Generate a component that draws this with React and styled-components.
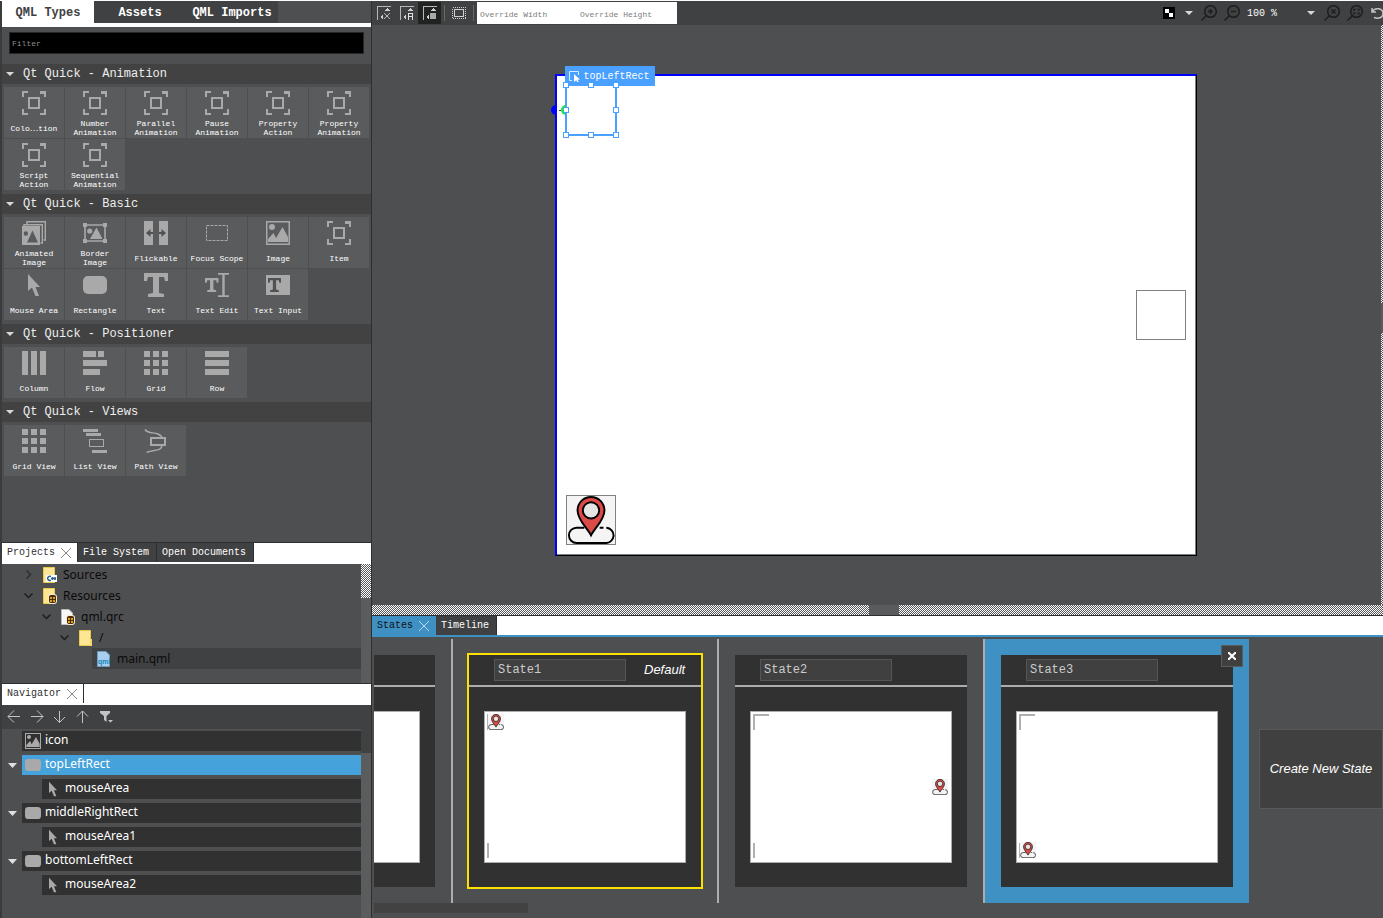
import React from "react";
import styled, { createGlobalStyle, css } from "styled-components";

const mono = `"Liberation Mono", "Noto Sans CJK SC", monospace`;
const sans = `"Noto Sans", "Noto Sans CJK SC", sans-serif`;
const arial = `"Liberation Sans", Arial, sans-serif`;
const c = {
  panel: "#4e4f51",
  bar: "#404142",
  dark: "#313131",
  header: "#424242",
  line: "#2e2f30",
  icon: "#a9a9a9",
  blue: "#3f91c4",
  select: "#49a0ff",
  rule: "#adadad",
};
const dither = css`
  background: repeating-conic-gradient(#ffffff 0 25%, #58595b 0 50%) 0 0 / 2px 2px;
`;

const GlobalStyle = createGlobalStyle`
  *, *::before, *::after { box-sizing: border-box; }
  body { margin: 0; background: ${c.panel}; }
  button, input, select { margin: 0; padding: 0; border: 0; border-radius: 0; background: none; font: inherit; color: inherit; outline: none; }
  ul { list-style: none; margin: 0; padding: 0; }
  h1, h2 { margin: 0; font: inherit; }
  svg { display: block; flex: none; }
`;

const Window = styled.div`
  display: grid;
  grid-template-columns: 372px minmax(0, 1fr);
  min-height: 100vh;
  border-top: 1px solid #fdfdfd;
  background: ${c.panel};
  font-family: ${mono};
  font-size: 10px;
  color: #ffffff;
`;
const Sidebar = styled.aside`
  display: flex;
  flex-direction: column;
  border-left: 2px solid #3a3b3c;
  border-right: 1px solid ${c.line};
`;
const Main = styled.main`
  display: flex;
  flex-direction: column;
  min-width: 0;
`;

/* Library */
const Library = styled.section`
  flex: 1;
`;
const LibraryTabs = styled.div`
  display: flex;
  align-items: flex-start;
  height: 26px;
  border-bottom: 4px solid #ffffff;
`;
const LibraryTab = styled.button`
  width: 92px;
  height: 22px;
  padding-top: 2px;
  font-size: 12px;
  line-height: 16px;
  font-weight: bold;
  white-space: nowrap;
  background: ${(p) => (p.$active ? "#ffffff" : c.bar)};
  color: ${(p) => (p.$active ? "#404142" : "#ffffff")};
`;
const FilterBox = styled.div`
  padding: 5px 7px 10px;
`;
const FilterInput = styled.input`
  display: block;
  width: 100%;
  height: 22px;
  background: #000000;
  border: 1px solid #262728;
  padding: 0 2px;
  font-size: 8px;
  &::placeholder { color: #8e8e8e; opacity: 1; }
`;
const SectionHeader = styled.button`
  display: flex;
  align-items: center;
  gap: 9px;
  width: 100%;
  height: 20px;
  padding-left: 4px;
  background: ${c.header};
  color: #eeeeee;
  font-size: 12px;
`;
const Tiles = styled.div`
  display: flex;
  flex-wrap: wrap;
  gap: 1px;
  padding: 3px 0 4px 2px;
`;
const Tile = styled.button`
  display: flex;
  flex-direction: column;
  align-items: center;
  gap: 4px;
  width: 60px;
  height: 51px;
  padding-top: 4px;
  background: #5a5b5d;
`;
const TileLabel = styled.span`
  display: flex;
  align-items: center;
  justify-content: center;
  height: 18px;
  font-size: 8px;
  line-height: 9px;
  text-align: center;
  white-space: pre;
`;

/* Dock tabs */
const DockTabs = styled.div`
  display: flex;
  align-items: flex-start;
  height: 22px;
  background: #ffffff;
  border-top: 1px solid ${c.line};
  ${(p) => p.$accent && css`border-bottom: 2px solid ${c.blue};`}
`;
const DockTab = styled.button`
  display: flex;
  align-items: center;
  gap: 6px;
  height: 19px;
  padding: 0 6px;
  padding-left: 5px;
  color: ${(p) => (p.$tone === "dark" ? "#ffffff" : p.$tone === "blue" ? "#101010" : "#303030")};
  background: ${(p) => (p.$tone === "dark" ? c.bar : p.$tone === "blue" ? c.blue : "#ffffff")};
  border-right: 1px solid ${(p) => (p.$tone === "blue" ? c.blue : c.line)};
  white-space: nowrap;
`;
const DockLabel = styled.span`
  line-height: 14px;
  padding-right: ${(p) => (p.$alone ? 1 : 0)}px;
`;

/* Trees */
const ScrollRow = styled.div`
  display: grid;
  grid-template-columns: 1fr 10px;
`;
const Track = styled.div`
  background: #5b5c5e;
  min-height: 0;
`;
const Thumb = styled.div`
  height: ${(p) => p.$size};
  ${(p) => (p.$plain ? css`background: ${c.bar};` : dither)}
`;
const ProjectTree = styled.ul`
  font-family: ${sans};
  font-size: 12px;
  color: #0a0a0a;
  padding-bottom: 14px;
`;
const ProjectRow = styled.li`
  display: flex;
  height: 21px;
  padding-left: ${(p) => 20 + p.$depth * 18}px;
`;
const Expander = styled.span`
  display: flex;
  align-items: center;
  width: 16px;
  padding-left: 2px;
`;
const ProjectItem = styled.span`
  display: flex;
  align-items: center;
  gap: 6px;
  flex: 1;
  padding-left: 4px;
  background: ${(p) => (p.$selected ? c.bar : "transparent")};
`;
const NavTools = styled.div`
  display: flex;
  align-items: center;
  gap: 7px;
  height: 24px;
  padding-left: 4px;
  background: ${c.bar};
`;
const ToolButton = styled.button`
  display: flex;
  align-items: center;
  justify-content: center;
  width: ${(p) => p.$w || 16}px;
  height: 22px;
  background: ${(p) => (p.$active ? "#212222" : "transparent")};
`;
const NavTree = styled.ul`
  font-family: ${sans};
  font-size: 12px;
  padding: 2px 0 19px;
`;
const NavRow = styled.li`
  display: flex;
  align-items: center;
  height: 20px;
  margin-bottom: 4px;
  padding-left: ${(p) => p.$depth * 20}px;
`;
const NavArrow = styled.span`
  display: flex;
  justify-content: center;
  width: 20px;
`;
const NavItem = styled.span`
  display: flex;
  align-items: center;
  gap: 4px;
  flex: 1;
  height: 20px;
  padding-left: 3px;
  background: ${(p) => (p.$selected ? "#46a2da" : c.dark)};
`;
const NavName = styled.span`
  height: 20px;
  line-height: 18px;
`;

/* Form editor */
const EditorBar = styled.div`
  display: flex;
  align-items: center;
  height: 24px;
  background: ${c.bar};
  overflow: hidden;
`;
const Separator = styled.span`
  width: 1px;
  height: 16px;
  margin: 0 3px;
  background: #66676a;
`;
const SizeInput = styled.input`
  width: 100px;
  height: 22px;
  padding: 2px 3px 0;
  background: #ffffff;
  color: #404142;
  font-size: 8px;
  &::placeholder { color: #7c7c7c; opacity: 1; }
`;
const EditorRight = styled.div`
  display: flex;
  align-items: center;
  gap: 7px;
  margin-left: auto;
  margin-right: -3px;
`;
const ZoomField = styled.label`
  display: flex;
  align-items: center;
  width: 70px;
`;
const ZoomSelect = styled.select`
  appearance: none;
  width: 60px;
  color: #ffffff;
`;
const CanvasArea = styled.div`
  flex: 1;
  display: grid;
  grid-template-columns: minmax(0, 1fr) 2px;
  grid-template-rows: 1fr 10px;
`;
const Surface = styled.div`
  display: flex;
  align-items: center;
  justify-content: center;
  padding-right: 2px;
  overflow: hidden;
`;
const ScrollTrack = styled.div`
  display: flex;
  align-items: center;
  justify-content: center;
  ${(p) => p.$wide && css`grid-column: 1 / 3; padding-left: 12px;`}
  ${(p) => !p.$wide && css`flex-direction: column; padding-top: 6px;`}
  ${dither}
`;
const ScrollHandle = styled.div`
  width: ${(p) => (p.$wide ? "30px" : "2px")};
  height: ${(p) => (p.$wide ? "10px" : "30px")};
  background: #5a5b5d;
`;
const Artboard = styled.div`
  position: relative;
  flex: none;
  width: 642px;
  height: 482px;
  background: #ffffff;
  border: solid;
  border-width: 2px 1px 1px 2px;
  border-color: #0000ff #000000 #000000 #0000ff;
  box-shadow: inset -1px -1px 0 #808080;
`;
const Shape = styled.div`
  position: absolute;
  left: ${(p) => p.$x}px;
  top: ${(p) => p.$y}px;
  width: 50px;
  height: 50px;
  border: 1px solid #808080;
`;
const Selection = styled.div`
  position: absolute;
  left: 8px;
  top: 8px;
  width: 52px;
  height: 52px;
  border: 2px solid ${c.select};
`;
const Handle = styled.span`
  position: absolute;
  left: ${(p) => p.$x}px;
  top: ${(p) => p.$y}px;
  width: 6px;
  height: 6px;
  background: #ffffff;
  border: 1px solid ${c.select};
`;
const SelectionLabel = styled.div`
  position: absolute;
  left: 8px;
  top: -10px;
  display: flex;
  align-items: center;
  gap: 4px;
  height: 20px;
  padding: 0 5px 0 3px;
  background: ${c.select};
`;
const Anchor = styled.span`
  position: absolute;
  left: ${(p) => p.$x}px;
  top: 29px;
  width: 5px;
  height: 10px;
  border-radius: 5px 0 0 5px;
  background: ${(p) => p.$color};
`;
const AnchorLink = styled.span`
  position: absolute;
  left: 2px;
  top: 34px;
  width: 2px;
  height: 1px;
  background: #404040;
`;

/* States */
const StatesStrip = styled.div`
  display: flex;
  padding: 2px 0 0 2px;
  overflow: hidden;
`;
const StateCell = styled.div`
  position: relative;
  flex: none;
  height: 264px;
  padding: 14px;
  border-left: 2px solid ${c.rule};
  background: ${(p) => (p.$selected ? c.blue : "transparent")};
`;
const BaseCell = styled.div`
  display: flex;
  justify-content: flex-end;
  flex: none;
  width: 77px;
  height: 264px;
  padding: 14px 14px 14px 0;
  overflow: hidden;
`;
const Card = styled.article`
  flex: none;
  width: 236px;
  height: 236px;
  border: 2px solid ${(p) => (p.$default ? "#ffe100" : "transparent")};
  background: ${c.dark};
  background-clip: padding-box;
`;
const CardHead = styled.header`
  display: flex;
  align-items: center;
  gap: 18px;
  height: 32px;
  padding-left: 25px;
  border-bottom: 2px solid ${c.rule};
`;
const StateName = styled.input`
  width: 132px;
  height: 22px;
  padding: 0 3px;
  background: #404040;
  border: 1px solid #555555;
  color: #cccccc;
  font-size: 12px;
`;
const DefaultMark = styled.span`
  font: italic 13px/16px ${arial};
`;
const Preview = styled.div`
  width: 202px;
  height: 152px;
  margin: 24px 15px;
  background: #ffffff;
  border: 1px solid ${c.rule};
`;
const RemoveState = styled.button`
  position: absolute;
  top: 6px;
  right: 6px;
  display: flex;
  align-items: center;
  justify-content: center;
  width: 22px;
  height: 22px;
  background: #404040;
  border: 1px solid #5a5b5d;
`;
const CreateState = styled.button`
  align-self: center;
  flex: none;
  width: 124px;
  height: 80px;
  margin: 0 0 4px 10px;
  background: #404040;
  border: 1px solid #58595a;
  font: italic 13px/16px ${arial};
`;
const StatesScroll = styled.div`
  height: 15px;
  padding-left: 2px;
`;
const StatesThumb = styled.div`
  width: 154px;
  height: 10px;
  background: ${c.header};
`;

/* Drawings */
const Svg = ({ s = 24, w, h, box, children, ...rest }) => (
  <svg width={w || s} height={h || s} viewBox={box || `0 0 ${w || s} ${h || s}`} fill={c.icon} aria-hidden="true" {...rest}>{children}</svg>
);
const Down = ({ w = 8 }) => (
  <Svg w={w} h={4} box="0 0 8 4" fill="#d8d8d8"><path d="M0 0H8L4 4Z" /></Svg>
);
const Close = ({ color = "#868686" }) => (
  <Svg s={10} fill="none" stroke={color}><path d="M0 0L10 10M10 0L0 10" /></Svg>
);
const slabT = "M0 0H24V8H21L20 4H15V20L20 21V24H4V21L9 20V4H4L3 8H0Z";
const cells = [0, 9, 18].flatMap((x) => [0, 9, 18].map((y) => `M${x} ${y}h6v6h-6z`)).join("");
const cursor = "M6 1V18L10 14.5L13 22L13.5 23H17L13.5 14H18Z";
const art = {
  item: (
    <g shapeRendering="crispEdges">
      <path d="M0 0H6V2H2V6H0ZM18 0H24V6H22V3H18ZM0 18H2V22H6V24H0ZM22 18H24V24H18V22H22Z" />
      <path fillRule="evenodd" d="M6 6H18V18H6ZM8 8V16H16V8Z" />
    </g>
  ),
  animated: (
    <g>
      <path fill="none" stroke={c.icon} strokeWidth="1.4" d="M5 3V.7H23.3V19H21.5M2 5V3.7H20.3V22H18.5" />
      <path fillRule="evenodd" d="M0 5H18V24H0ZM6 12.5a2.2 2.2 0 1 0-4.4 0a2.2 2.2 0 1 0 4.4 0M5 21.5H16L10.5 9.5Z" />
    </g>
  ),
  border: (
    <g>
      <path d="M0 2H4V6H0ZM20 2H24V6H20ZM0 18H4V22H0ZM20 18H24V22H20Z" />
      <path fill="none" stroke={c.icon} strokeWidth="1.6" d="M2 4H22V20H2Z" />
      <circle cx="6.7" cy="10" r="2.6" /><path d="M7 18L13.5 6.5L19.5 18Z" />
    </g>
  ),
  flick: (
    <g>
      <path d="M0 0H9V24H0ZM15 0H24V24H15Z" />
      <path fill="#515254" d="M2 12L6.5 8V11H9V13H6.5V16ZM22 12L17.5 8V11H15V13H17.5V16Z" />
    </g>
  ),
  focus: <path fill="none" stroke={c.icon} strokeDasharray="3 1" d="M1.500 4.500H22.500V19.500H1.500Z" />,
  image: (
    <g>
      <path fillRule="evenodd" d="M0 0H24V24H0ZM1.500 1.500V22.500H22.500V1.500Z" />
      <path d="M2 21V18L7.500 12L10 17L16.500 6L22 16V21ZM9 6A3 3 0 1 1 3 6A3 3 0 1 1 9 6" />
    </g>
  ),
  mouse: <path d={cursor} />,
  rect: <rect y="3" width="24" height="18" rx="5" />,
  text: <path d={slabT} />,
  edit: (
    <g>
      <path d={slabT} transform="translate(0 5) scale(.56 .58)" />
      <path d="M13 0H24V1.800H19.700V22.200H24V24H13V22.200H17.300V1.800H13Z" />
    </g>
  ),
  input: (
    <g>
      <path d="M0 2H24V22H0Z" />
      <path fill="#515254" d={slabT} transform="translate(2 5) scale(.54 .58)" />
    </g>
  ),
  column: <path d="M0 0h6v24h-6zM9 0h6v24h-6zM18 0h6v24h-6z" />,
  flow: <path d="M0 0h13v6h-13zM15 0h6v6h-6zM0 9h24v6h-24zM0 18h17v6h-17z" />,
  grid: <path d={cells} />,
  row: <path d="M0 0h24v6h-24zM0 9h24v6h-24zM0 18h24v6h-24z" />,
  list: (
    <g shapeRendering="crispEdges">
      <path d="M0 0h15v3h-15zM3 4h15v3h-15zM9 21h15v3h-15z" />
      <path fillRule="evenodd" d="M6 10H21V18H6ZM7 11V17H20V11Z" />
    </g>
  ),
  path: (
    <g fill="none" stroke={c.icon}>
      <path strokeWidth="1.500" d="M1 .5C4 5 10 3 14 5C17 6.500 18 8 18 9M18 16C18 23 9 20 2.500 23.500" />
      <path strokeWidth="2" d="M7 9H21V16H7Z" />
    </g>
  ),
};

const Pin = ({ x = 0, y = 0, size = 50 }) => (
  <svg x={x} y={y} width={size} height={size} viewBox="0 0 50 50" aria-hidden="true">
    <path fill="#f4f4f4" d="M0 0H50V50H0Z" />
    <g stroke="#000000" strokeWidth="2" fill="none">
      <path d="M18 33H10A8 8 0 0 0 10 49H40A8 8 0 0 0 41 33M34 33H38" />
      <path fill="#dc4a48" d="M25 41C21 33 11 25 11 15A14 14 0 0 1 39 15C39 25 29 33 25 41Z" />
      <circle fill="#e5e5e5" cx="25" cy="15" r="8.500" />
    </g>
  </svg>
);

const sections = [
  ["Qt Quick - Animation", [
    ["Colo⋯tion", "item"], ["Number\nAnimation", "item"], ["Parallel\nAnimation", "item"], ["Pause\nAnimation", "item"],
    ["Property\nAction", "item"], ["Property\nAnimation", "item"], ["Script\nAction", "item"], ["Sequential\nAnimation", "item"],
  ]],
  ["Qt Quick - Basic", [
    ["Animated\nImage", "animated"], ["Border\nImage", "border"], ["Flickable", "flick"], ["Focus Scope", "focus"], ["Image", "image"],
    ["Item", "item"], ["Mouse Area", "mouse"], ["Rectangle", "rect"], ["Text", "text"], ["Text Edit", "edit"], ["Text Input", "input"],
  ]],
  ["Qt Quick - Positioner", [["Column", "column"], ["Flow", "flow"], ["Grid", "grid"], ["Row", "row"]]],
  ["Qt Quick - Views", [["Grid View", "grid"], ["List View", "list"], ["Path View", "path"]]],
];

const Globe = () => (
  <g>
    <rect x="6" y="6" width="9" height="10" rx="3" fill="#f5e9d0" />
    <rect x="7" y="7" width="7" height="8" rx="2" fill="#4a2b05" />
    <path fill="#d9a520" d="M8 9h2v2h-2zM11 9h2v2h-2zM8 12h2v2h-2zM11 12h2v2h-2z" />
  </g>
);
const FileIcon = ({ kind }) => (
  <Svg w={15} h={16}>
    {kind === "qrc" && <path fill="#f7f7f7" stroke="#b9b9b9" d="M1.500.5H9L12.500 4V15.500H1.500Z" />}
    {kind === "qml" && <path fill="#a9cfee" stroke="#6f9dc0" d="M1.500.5H10L13.500 4V15.500H1.500Z" />}
    {kind !== "qrc" && kind !== "qml" && <path fill="#ffe694" stroke="#eccb4a" d="M1.500.5H12.500V15.500H1.500Z" />}
    {kind === "folder" && <path fill="#f5d868" d="M12 9h2v7h-2z" />}
    {kind === "cpp" && (
      <g>
        <path fill="#ffffff" d="M4 8H15V15H4Z" />
        <path fill="none" stroke="#2d6390" strokeWidth="1.500" d="M9 9.500C5 8 4 14 9 13.500M9 11.500H14M10.500 10V13M13 10V13" />
      </g>
    )}
    {(kind === "res" || kind === "qrc") && <Globe />}
    {kind === "qml" && <text x="2" y="13" fontSize="7" fontFamily="Liberation Sans" fontWeight="bold" fill="#1286b8">qml</text>}
  </Svg>
);
const files = [
  ["Sources", "cpp", 0, "closed"], ["Resources", "res", 0, "open"], ["qml.qrc", "qrc", 1, "open"],
  ["/", "folder", 2, "open"], ["main.qml", "qml", 3, "none"],
];
const items = [
  ["icon", "image", 0], ["topLeftRect", "rect", 0, true], ["mouseArea", "mouse", 1],
  ["middleRightRect", "rect", 0, true], ["mouseArea1", "mouse", 1],
  ["bottomLeftRect", "rect", 0, true], ["mouseArea2", "mouse", 1],
];

const LineIcon = ({ d, label }) => (
  <ToolButton aria-label={label}>
    <Svg s={14} fill="none" stroke="#c4c4c4"><path d={d} /></Svg>
  </ToolButton>
);
const SnapIcon = ({ kind }) => (
  <Svg s={14} shapeRendering="crispEdges">
    <path d="M0 0H14V1H1V14H0Z" fill="#b8b8b8" />
    <path d="M3 11L6 9V13ZM8 5L10 2L13 5Z" fill="#d0d0d0" />
    {kind === "x" && <path d="M7 7L13 13M13 7L7 13" stroke="#b8b8b8" shapeRendering="auto" />}
    {kind === "a" && <path fill="#e0e0e0" d="M8 7h5v7h-1v-3h-3v3h-1zM9 8v2h3v-2z" fillRule="evenodd" />}
    {kind === "box" && <path fill="#a9a9a9" d="M7 7h6v6h-6z" />}
  </Svg>
);
const Lens = ({ mark }) => (
  <Svg s={16} fill="none" stroke="#1d1e1f" strokeWidth="1.500">
    <circle cx="9.500" cy="6.500" r="5.800" /><path d="M5.500 10.500L.5 15.500" /><path d={mark} />
  </Svg>
);

function PreviewMarks({ pin, top }) {
  return (
    <svg width="200" height="150" viewBox="0 0 200 150" aria-hidden="true">
      <path fill="none" stroke="#b0b0b0" strokeWidth="2" d={top ? "M3 18V3H18" : ""} />
      <path fill="none" stroke="#b0b0b0" strokeWidth="2" d="M3 131V146" />
      {pin && <Pin x={pin[0]} y={pin[1]} size={16} />}
    </svg>
  );
}
function StateCard({ name, isDefault, pin, top }) {
  return (
    <Card $default={isDefault}>
      <CardHead>
        {name && <StateName aria-label="State name" defaultValue={name} />}
        {isDefault && <DefaultMark>Default</DefaultMark>}
      </CardHead>
      <Preview>{name && <PreviewMarks pin={pin} top={top} />}</Preview>
    </Card>
  );
}

export default function App() {
  return (
    <Window>
      <GlobalStyle />
      <Sidebar>
        <Library>
          <LibraryTabs>
            <LibraryTab $active>QML Types</LibraryTab>
            <LibraryTab>Assets</LibraryTab>
            <LibraryTab>QML Imports</LibraryTab>
          </LibraryTabs>
          <FilterBox><FilterInput aria-label="Filter" placeholder="Filter" /></FilterBox>
          {sections.map(([title, tiles]) => (
            <section key={title}>
              <h2><SectionHeader><Down />{title}</SectionHeader></h2>
              <Tiles>
                {tiles.map(([label, icon], i) => (
                  <Tile key={i}><Svg>{art[icon]}</Svg><TileLabel>{label}</TileLabel></Tile>
                ))}
              </Tiles>
            </section>
          ))}
        </Library>

        <DockTabs>
          <DockTab><DockLabel>Projects</DockLabel><Close /></DockTab>
          <DockTab $tone="dark"><DockLabel $alone>File System</DockLabel></DockTab>
          <DockTab $tone="dark"><DockLabel $alone>Open Documents</DockLabel></DockTab>
        </DockTabs>
        <ScrollRow>
          <ProjectTree>
            {files.map(([name, kind, depth, state]) => (
              <ProjectRow key={name} $depth={depth}>
                <Expander>
                  {state !== "none" && (
                    <Svg s={9} fill="none" stroke={state === "open" ? "#1c1c1c" : "#303030"} strokeWidth="1.500">
                      <path d={state === "open" ? "M.5 2.500L4.500 6.500L8.500 2.500" : "M2.500 .5L6.500 4.500L2.500 8.500"} />
                    </Svg>
                  )}
                </Expander>
                <ProjectItem $selected={kind === "qml"}><FileIcon kind={kind} />{name}</ProjectItem>
              </ProjectRow>
            ))}
          </ProjectTree>
          <Track><Thumb $size="34px" /></Track>
        </ScrollRow>

        <DockTabs><DockTab><DockLabel>Navigator</DockLabel><Close /></DockTab></DockTabs>
        <NavTools>
          <LineIcon label="Move left" d="M13 6.500H1M7 .5L1 6.500L7 12.500" />
          <LineIcon label="Move right" d="M1 6.500H13M7 .5L13 6.500L7 12.500" />
          <LineIcon label="Move down" d="M6.500 1V12.500M1 7L6.500 12.500L12 7" />
          <LineIcon label="Move up" d="M6.500 13V1M1 6.500L6.500 1L12 6.500" />
          <ToolButton aria-label="Filter">
            <Svg s={14} fill="#c4c4c4"><path d="M1 1H11V3L7.500 6V12L5 10V6L1 3ZM9 10H14L11.500 12.500Z" /></Svg>
          </ToolButton>
        </NavTools>
        <ScrollRow>
          <NavTree>
            {items.map(([name, icon, depth, open]) => (
              <NavRow key={name} $depth={depth}>
                <NavArrow>{open && <Svg w={9} h={5} fill="#e0e0e0"><path d="M0 0H9L4.500 5Z" /></Svg>}</NavArrow>
                <NavItem $selected={name === "topLeftRect"}>
                  <Svg s={16} box="0 0 24 24">{art[icon]}</Svg>
                  <NavName>{name}</NavName>
                </NavItem>
              </NavRow>
            ))}
          </NavTree>
          <Track><Thumb $size="24px" $plain /></Track>
        </ScrollRow>
      </Sidebar>

      <Main>
        <EditorBar>
          <ToolButton $w={23} aria-label="No snapping"><SnapIcon kind="x" /></ToolButton>
          <ToolButton $w={23} aria-label="Snap with anchors"><SnapIcon kind="a" /></ToolButton>
          <ToolButton $w={23} $active aria-label="Snap without anchors"><SnapIcon kind="box" /></ToolButton>
          <Separator />
          <ToolButton $w={22} aria-label="Show bounding rectangles">
            <Svg w={14} h={12} fill="none" stroke="#d0d0d0" shapeRendering="crispEdges">
              <path strokeDasharray="1 1" d="M.5.5H13.500V11.500H.5Z" /><path d="M2.500 2.500H11.500V9.500H2.500Z" />
            </Svg>
          </ToolButton>
          <Separator />
          <SizeInput aria-label="Override Width" placeholder="Override Width" />
          <SizeInput aria-label="Override Height" placeholder="Override Height" />
          <EditorRight>
            <ToolButton aria-label="Canvas colour">
              <Svg s={12} shapeRendering="crispEdges"><path fill="#000" d="M0 0h12v12h-12z" /><path fill="#fff" d="M2 2h4v4h-4zM6 6h4v4h-4z" /></Svg>
            </ToolButton>
            <ToolButton $w={10} aria-label="Canvas colour menu"><Down /></ToolButton>
            <ToolButton aria-label="Zoom in"><Lens mark="M7 6.500H12M9.500 4V9" /></ToolButton>
            <ToolButton aria-label="Zoom out"><Lens mark="M7 6.500H12" /></ToolButton>
            <ZoomField>
              <ZoomSelect aria-label="Zoom"><option>100 %</option></ZoomSelect>
              <Down />
            </ZoomField>
            <ToolButton aria-label="Fit all"><Lens mark="M7.500 4.500L11.500 8.500M11.500 4.500L7.500 8.500" /></ToolButton>
            <ToolButton aria-label="Fit selection"><Lens mark="M7 5.500V4.500H8.500M10.500 4.500H12V5.500M7 7.500V8.500H8.500M10.500 8.500H12V7.500" /></ToolButton>
            <ToolButton aria-label="Reset view">
              <Svg s={14} fill="none" stroke="#c4c4c4" strokeWidth="1.500"><path d="M1 2V6H5M1.500 5.500C4 1 12 2 12 7.500C12 12 7 13 3 11.500" /></Svg>
            </ToolButton>
          </EditorRight>
        </EditorBar>

        <CanvasArea>
          <Surface>
            <Artboard>
              <Anchor $x={-6} $color="#0000ff" />
              <AnchorLink />
              <Anchor $x={4} $color="#00ff00" />
              <Shape $x={579} $y={214} />
              <Shape $x={9} $y={419}><Svg s={48} box="0 0 50 50"><Pin /></Svg></Shape>
              <SelectionLabel>
                <Svg s={12} fill="none" stroke="#d8ebff">
                  <path d="M4 10.500H1.500V1.500H10.500V5" />
                  <path fill="#ffffff" stroke="none" d="M6 4L12 9.500L9.500 9.700L10.800 12L9.500 12.500L8.200 10.200L6 12Z" />
                </Svg>
                topLeftRect
              </SelectionLabel>
              <Selection>
                {[-4, 21, 46].flatMap((x) => [-4, 21, 46].map((y) =>
                  x === 21 && y === 21 ? null : <Handle key={`${x}.${y}`} $x={x} $y={y} />
                ))}
              </Selection>
            </Artboard>
          </Surface>
          <ScrollTrack><ScrollHandle /></ScrollTrack>
          <ScrollTrack $wide><ScrollHandle $wide /></ScrollTrack>
        </CanvasArea>

        <DockTabs $accent>
          <DockTab $tone="blue"><DockLabel>States</DockLabel><Close color="#b6dbf2" /></DockTab>
          <DockTab $tone="dark"><DockLabel $alone>Timeline</DockLabel></DockTab>
        </DockTabs>
        <StatesStrip>
          <BaseCell><StateCard /></BaseCell>
          <StateCell><StateCard name="State1" isDefault top pin={[3, 2]} /></StateCell>
          <StateCell><StateCard name="State2" top pin={[181, 67]} /></StateCell>
          <StateCell $selected>
            <StateCard name="State3" top pin={[3, 130]} />
            <RemoveState aria-label="Remove state">
              <Svg s={8} fill="none" stroke="#ffffff" strokeWidth="2"><path d="M0 0L8 8M8 0L0 8" /></Svg>
            </RemoveState>
          </StateCell>
          <CreateState>Create New State</CreateState>
        </StatesStrip>
        <StatesScroll><StatesThumb /></StatesScroll>
      </Main>
    </Window>
  );
}
